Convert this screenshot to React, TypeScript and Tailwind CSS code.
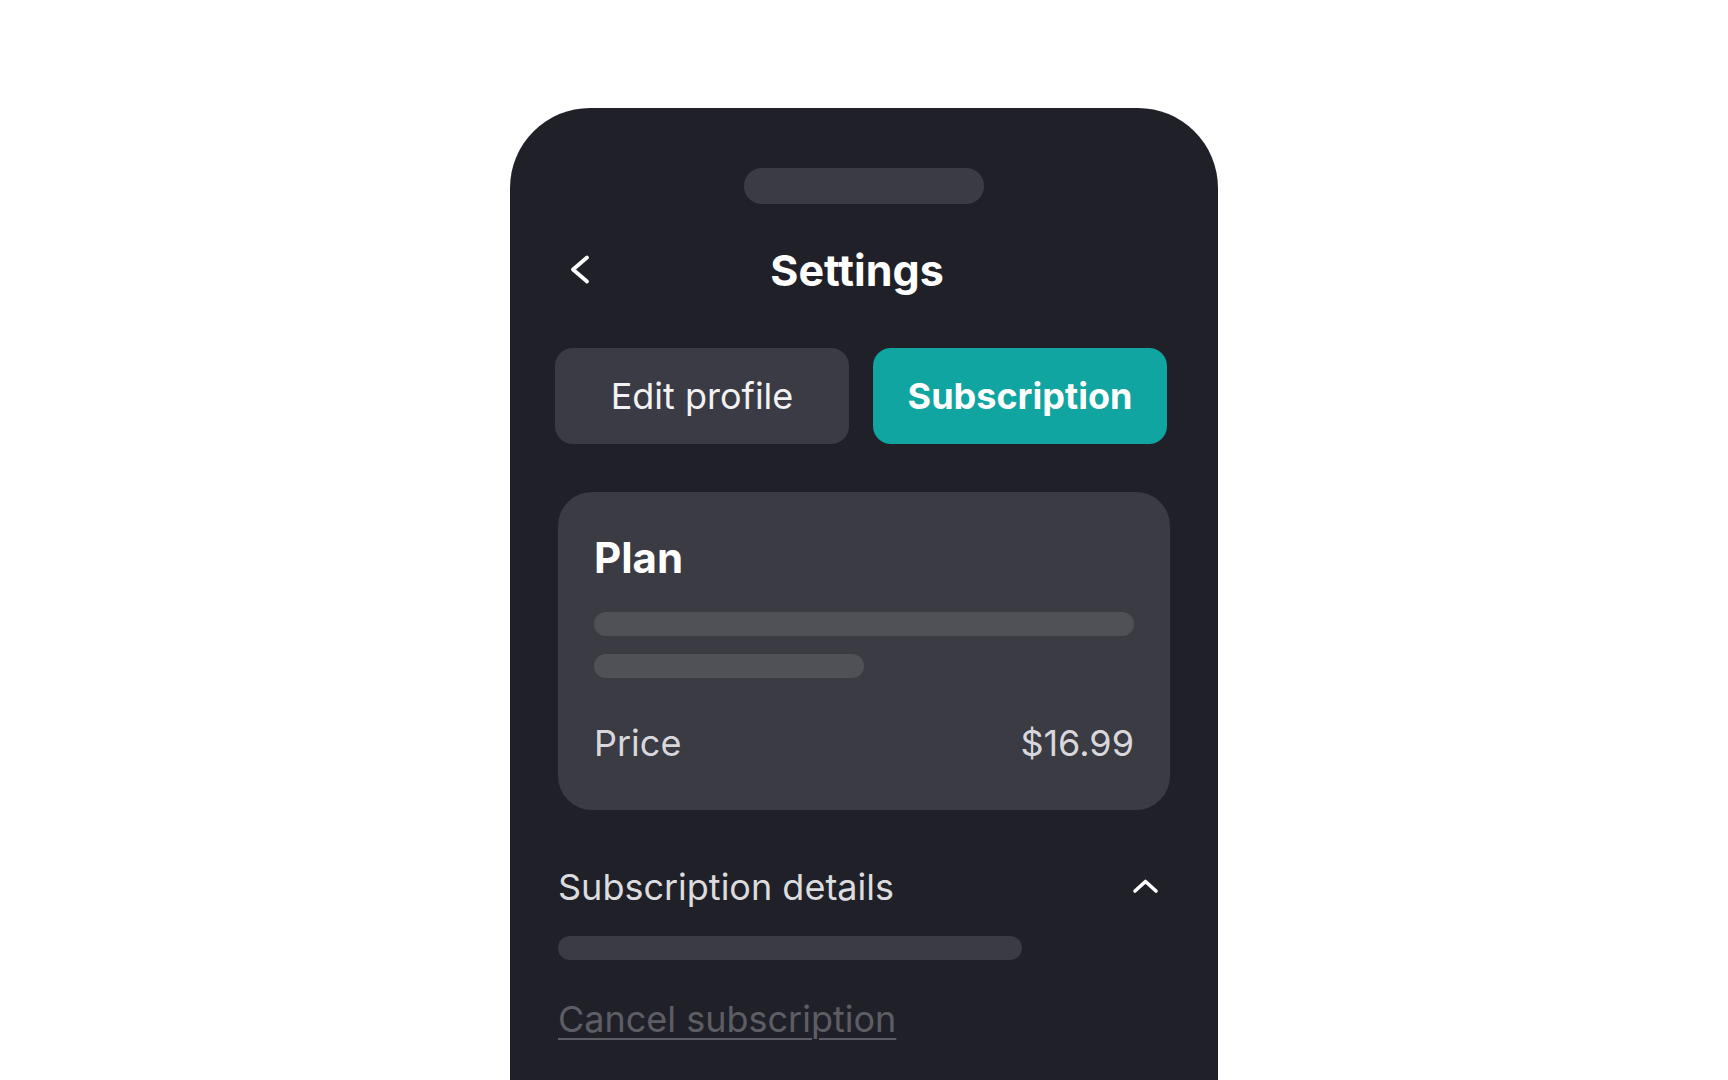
const BackIcon = () => (
  <svg width="24" height="32" viewBox="0 0 24 32" fill="none">
    <polyline
      points="19,3.5 5,15.5 19,27.5"
      stroke="white"
      strokeWidth="3.8"
      strokeLinecap="round"
      strokeLinejoin="round"
    />
  </svg>
);

const UpIcon = () => (
  <svg width="28" height="18" viewBox="0 0 28 18" fill="none">
    <polyline
      points="3,13 13.5,3.5 24,13"
      stroke="white"
      strokeWidth="3.6"
      strokeLinecap="round"
      strokeLinejoin="round"
    />
  </svg>
);

const App = () => {
  return (
    <div
      className="h-screen w-full overflow-hidden bg-white flex justify-center pt-[108px]"
      style={{ fontFamily: "Inter, 'Noto Sans', sans-serif" }}
    >
      <div className="w-[708px] h-[1000px] shrink-0 rounded-t-[80px] bg-[#202128] px-12 pt-[60px]">
        <div className="mx-auto h-9 w-[240px] rounded-full bg-[#3a3b44]" />

        <div className="mt-[38px] flex h-14 items-center">
          <div className="flex w-12 items-center pl-[10px]">
            <BackIcon />
          </div>
          <h1 className="flex-1 text-center text-[43px] font-bold text-white">
            Settings
          </h1>
          <div className="w-[62px]" />
        </div>

        <div className="mt-[50px] -ml-[3px] grid w-[612px] grid-cols-2 gap-6">
          <button className="h-24 rounded-[18px] bg-[#3a3b44] text-[36px] text-[#f2f2f3]">
            Edit profile
          </button>
          <button className="h-24 rounded-[18px] bg-[#10a5a0] text-[36px] font-bold text-white">
            Subscription
          </button>
        </div>

        <div className="mt-12 rounded-[34px] bg-[#3a3b43] px-9 pt-[42px] pb-[45px]">
          <h2 className="text-[42px] leading-[48px] font-bold text-white">Plan</h2>
          <div className="mt-[30px] h-6 w-full rounded-full bg-[#505157]" />
          <div className="mt-[18px] h-6 w-[270px] rounded-full bg-[#505157]" />
          <div className="mt-[43px] flex items-center justify-between text-[36px] leading-[44px] text-[#d8d8dc]">
            <span>Price</span>
            <span>$16.99</span>
          </div>
        </div>

        <div className="mt-[55px] flex items-center justify-between">
          <span className="text-[36px] leading-[44px] text-[#dcdcdf]">
            Subscription details
          </span>
          <div className="pr-[10px]">
            <UpIcon />
          </div>
        </div>
        <div className="mt-[27px] h-6 w-[464px] rounded-full bg-[#3a3b44]" />

        <a
          href="#"
          className="mt-[37px] inline-block text-[36px] leading-[44px] text-[#5d5e65] underline decoration-2 underline-offset-[6px]"
        >
          Cancel subscription
        </a>
      </div>
    </div>
  );
};

export default App;
